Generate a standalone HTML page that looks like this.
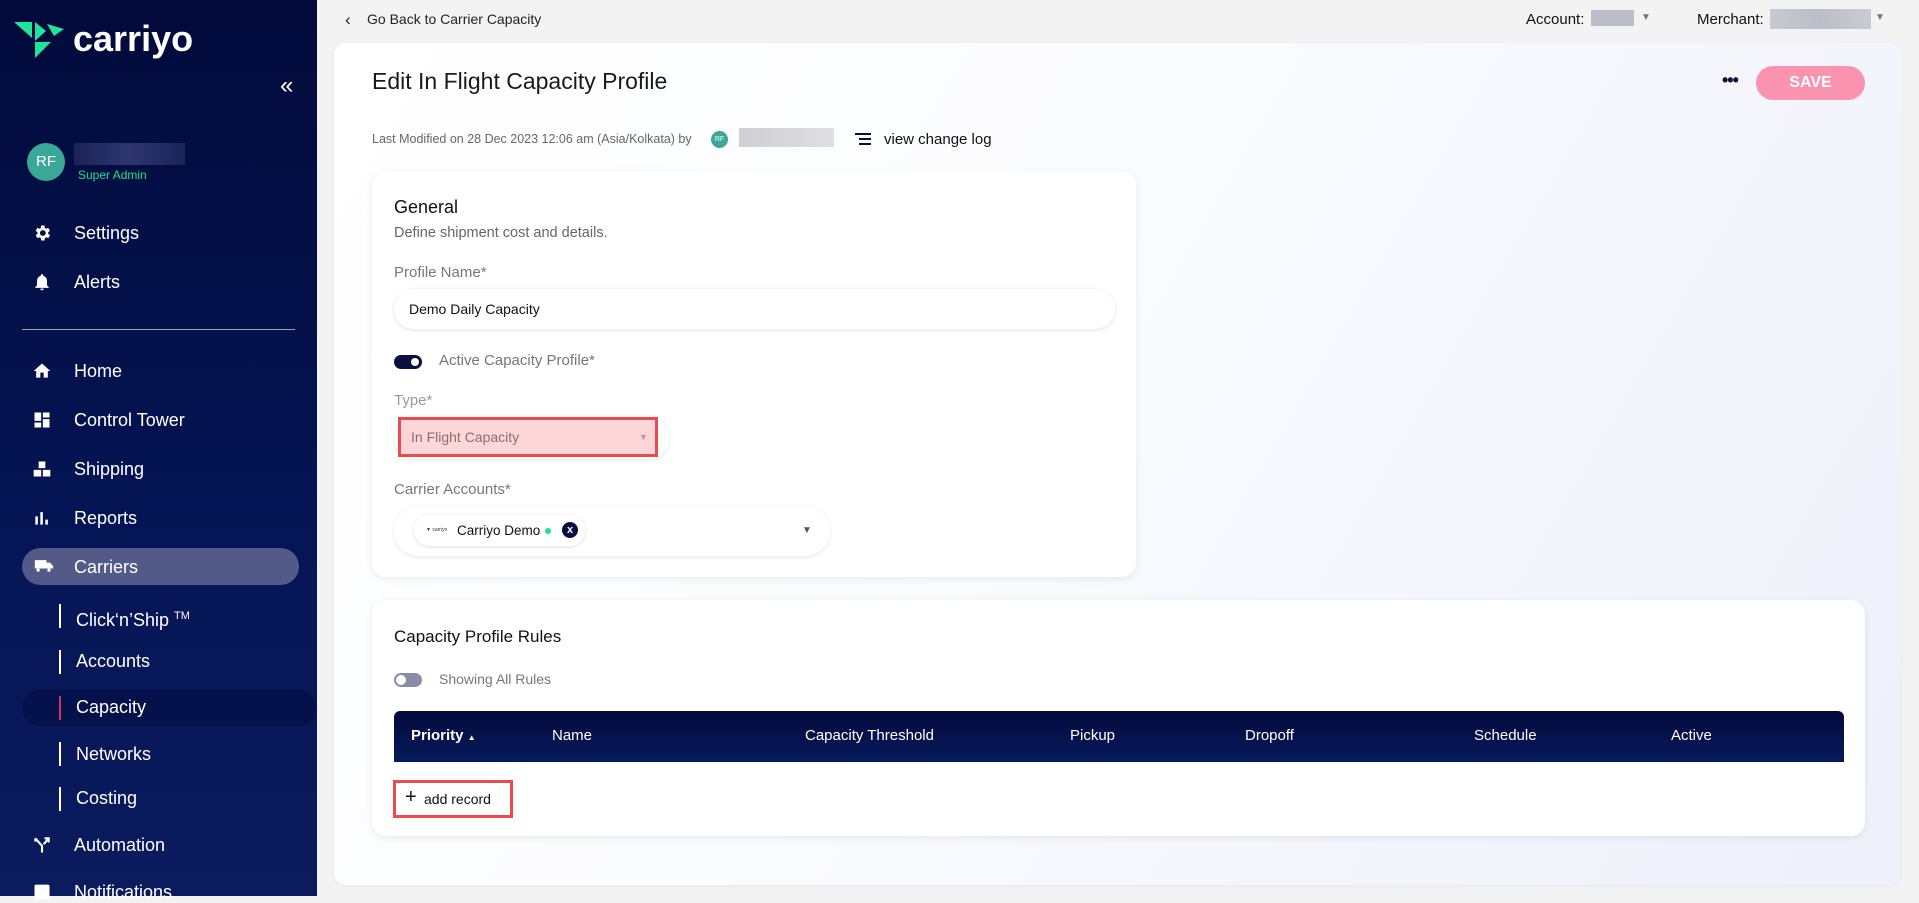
<!DOCTYPE html>
<html><head><meta charset="utf-8"><style>
*{box-sizing:border-box;margin:0;padding:0}
body{width:1919px;height:896px;overflow:hidden;background:#f3f3f3;font-family:"Liberation Sans",sans-serif;position:relative}
.abs{position:absolute}
#side{left:0;top:0;width:317px;height:896px;background:linear-gradient(180deg,#020a3b 0%,#051555 60%,#0a1b5e 100%)}
.nav{position:absolute;left:74px;color:#fff;font-size:18px;line-height:20px}
.ico{position:absolute;left:32px;width:20px;height:20px}
.sub{position:absolute;left:76px;color:#fff;font-size:18px;line-height:20px}
.bar{position:absolute;left:59px;width:2px;height:24px;background:#fff}
.card{position:absolute;background:#fff;border-radius:14px;box-shadow:0 2px 8px rgba(0,0,0,.08)}
.lbl{position:absolute;color:#777;font-size:14px}
</style></head><body>
<div id="side" class="abs">
  <svg class="abs" style="left:14px;top:20px" width="50" height="42" viewBox="0 0 50 42">
    <polygon points="0,2 18,2 18,18" fill="#1ee59a"/>
    <polygon points="21,2 32,11 21,21" fill="#1ee59a"/>
    <polygon points="33,4 50,9 40,16" fill="#1ee59a"/>
    <polygon points="21,22 37,22 21,38" fill="#1ee59a"/>
  </svg>
  <div class="abs" style="left:73px;top:18px;color:#fff;font-size:36px;font-weight:bold">carriyo</div>
  <div class="abs" style="left:280px;top:72px;color:#fff;font-size:24px">«</div>
  <div class="abs" style="left:27px;top:143px;width:38px;height:38px;border-radius:50%;background:#3aa896;color:#fff;font-size:15px;text-align:center;line-height:38px">RF</div>
  <div class="abs" style="left:74px;top:143px;width:111px;height:22px;background:linear-gradient(90deg,#1a2258,#2e3670,#1a2258)"></div>
  <div class="abs" style="left:78px;top:168px;color:#1de28f;font-size:12px">Super Admin</div>
  <svg class="ico" style="top:223px" viewBox="0 0 24 24"><path fill="#fff" d="M19.4 13a7.5 7.5 0 000-2l2.1-1.6-2-3.5-2.5 1a7 7 0 00-1.7-1L15 3h-4l-.4 2.9a7 7 0 00-1.7 1l-2.5-1-2 3.5L6.6 11a7.5 7.5 0 000 2l-2.1 1.6 2 3.5 2.5-1a7 7 0 001.7 1L11 21h4l.4-2.9a7 7 0 001.7-1l2.5 1 2-3.5zM13 15.5a3.5 3.5 0 110-7 3.5 3.5 0 010 7z"/></svg>
  <div class="nav" style="top:223px">Settings</div>
  <svg class="ico" style="top:272px" viewBox="0 0 24 24"><path fill="#fff" d="M12 22a2 2 0 002-2h-4a2 2 0 002 2zm6-6V11c0-3-1.6-5.6-4.5-6.3V4a1.5 1.5 0 00-3 0v.7C7.6 5.4 6 8 6 11v5l-2 2v1h16v-1z"/></svg>
  <div class="nav" style="top:272px">Alerts</div>
  <div class="abs" style="left:22px;top:329px;width:273px;height:1px;background:#9aa0c0"></div>
  <svg class="ico" style="top:361px" viewBox="0 0 24 24"><path fill="#fff" d="M10 20v-6h4v6h5v-8h3L12 3 2 12h3v8z"/></svg>
  <div class="nav" style="top:361px">Home</div>
  <svg class="ico" style="top:410px" viewBox="0 0 24 24"><path fill="#fff" d="M3 13h8V3H3zm0 8h8v-6H3zm10 0h8V11h-8zm0-18v6h8V3z"/></svg>
  <div class="nav" style="top:410px">Control Tower</div>
  <svg class="ico" style="top:459px" viewBox="0 0 24 24"><path fill="#fff" d="M8 3h8v8H8zM2 13h9v8H2zm11 0h9v8h-9z"/></svg>
  <div class="nav" style="top:459px">Shipping</div>
  <svg class="ico" style="top:508px" viewBox="0 0 24 24"><path fill="#fff" d="M4 10h3v10H4zm6-5h3v15h-3zm6 9h3v6h-3z"/></svg>
  <div class="nav" style="top:508px">Reports</div>
  <div class="abs" style="left:22px;top:548px;width:277px;height:37px;border-radius:19px;background:#525b87"></div>
  <svg class="ico" style="top:556px;width:24px" viewBox="0 0 24 24"><path fill="#fff" d="M1 5h14v10H1zm14 3h4l4 4v3h-8zM5 19a2 2 0 110-4 2 2 0 010 4zm13 0a2 2 0 110-4 2 2 0 010 4z"/></svg>
  <div class="nav" style="top:557px">Carriers</div>
  <div class="bar" style="top:604px"></div><div class="sub" style="top:606px">Click‘n’Ship <sup style="font-size:11px">TM</sup></div>
  <div class="bar" style="top:650px"></div><div class="sub" style="top:651px">Accounts</div>
  <div class="abs" style="left:22px;top:690px;width:295px;height:36px;border-radius:18px;background:#03093a;opacity:.45"></div>
  <div class="bar" style="top:696px;background:#d0365c"></div><div class="sub" style="top:697px">Capacity</div>
  <div class="bar" style="top:742px"></div><div class="sub" style="top:744px">Networks</div>
  <div class="bar" style="top:787px"></div><div class="sub" style="top:788px">Costing</div>
  <svg class="ico" style="top:835px" viewBox="0 0 24 24"><path stroke="#fff" stroke-width="2.5" fill="none" d="M4 4l8 9v8M20 4l-6 7M15 4h5v5M4 4v4"/></svg>
  <div class="nav" style="top:835px">Automation</div>
  <svg class="ico" style="top:883px" viewBox="0 0 24 24"><rect x="3" y="2" width="18" height="18" rx="2" fill="#fff"/></svg>
  <div class="nav" style="top:882px">Notifications</div>
</div>

<div class="abs" style="left:345px;top:10px;font-size:17px;color:#222">‹</div>
<div class="abs" style="left:367px;top:11px;font-size:14px;color:#222">Go Back to Carrier Capacity</div>
<div class="abs" style="left:1526px;top:11px;font-size:15px;color:#111">Account:</div>
<div class="abs" style="left:1591px;top:10px;width:43px;height:16px;background:#bcbdc8"></div>
<div class="abs" style="left:1641px;top:12px;font-size:10px;color:#777">▼</div>
<div class="abs" style="left:1697px;top:11px;font-size:15px;color:#111">Merchant:</div>
<div class="abs" style="left:1770px;top:9px;width:101px;height:20px;background:linear-gradient(90deg,#c8c9d1,#bcbdc8,#cacbd2)"></div>
<div class="abs" style="left:1875px;top:12px;font-size:10px;color:#777">▼</div>

<div class="abs" style="left:334px;top:43px;width:1567px;height:842px;border-radius:12px;background:linear-gradient(120deg,#ffffff 0%,#fbfcff 40%,#eef0fa 100%);box-shadow:0 1px 4px rgba(0,0,0,.05)"></div>
<div class="abs" style="left:372px;top:68px;font-size:23px;color:#1a1a1a">Edit In Flight Capacity Profile</div>
<div class="abs" style="left:1722px;top:70px;font-size:18px;color:#0a0f3f;font-weight:bold;letter-spacing:-1px">•••</div>
<div class="abs" style="left:1756px;top:66px;width:109px;height:34px;border-radius:17px;background:#f993b0;color:#fff;font-weight:bold;font-size:16px;text-align:center;line-height:34px">SAVE</div>
<div class="abs" style="left:372px;top:132px;font-size:12.5px;color:#666">Last Modified on 28 Dec 2023 12:06 am (Asia/Kolkata) by</div>
<div class="abs" style="left:711px;top:131px;width:17px;height:17px;border-radius:50%;background:#3aa896;color:#fff;font-size:7px;text-align:center;line-height:17px">RF</div>
<div class="abs" style="left:739px;top:128px;width:95px;height:19px;background:linear-gradient(90deg,#cfcfd4,#d6d6db,#e0e0e4)"></div>
<svg class="abs" style="left:855px;top:132px" width="16" height="14"><path d="M0 2h16M4 7h12M4 12h12" stroke="#0a0f3f" stroke-width="2"/></svg>
<div class="abs" style="left:884px;top:131px;font-size:15px;color:#111">view change log</div>

<div class="card" style="left:372px;top:171px;width:764px;height:406px"></div>
<div class="abs" style="left:394px;top:197px;font-size:18px;color:#111">General</div>
<div class="abs" style="left:394px;top:225px;font-size:14.5px;color:#666">Define shipment cost and details.</div>
<div class="lbl" style="left:394px;top:264px;font-size:15px">Profile Name*</div>
<div class="abs" style="left:394px;top:289px;width:721px;height:40px;border-radius:20px;background:#fff;box-shadow:0 1px 5px rgba(0,0,0,.12)"></div>
<div class="abs" style="left:409px;top:301px;font-size:14px;color:#111">Demo Daily Capacity</div>
<div class="abs" style="left:394px;top:355px;width:28px;height:14px;border-radius:7px;background:#0a0f3f"></div>
<div class="abs" style="left:411px;top:358px;width:8px;height:8px;border-radius:50%;background:#fff"></div>
<div class="lbl" style="left:439px;top:352px;font-size:15px">Active Capacity Profile*</div>
<div class="lbl" style="left:394px;top:392px;font-size:15px;color:#999">Type*</div>
<div class="abs" style="left:394px;top:417px;width:275px;height:42px;border-radius:21px;background:#fff;box-shadow:0 1px 5px rgba(0,0,0,.1)"></div>
<div class="abs" style="left:398px;top:417px;width:260px;height:40px;background:#fdd6d8;border:3px solid #ea4b4e"></div>
<div class="abs" style="left:411px;top:429px;font-size:14px;color:#8a6d70">In Flight Capacity</div>
<div class="abs" style="left:639px;top:432px;font-size:9px;color:#b89a9a">▼</div>
<div class="lbl" style="left:394px;top:481px;font-size:15px">Carrier Accounts*</div>
<div class="abs" style="left:394px;top:506px;width:436px;height:50px;border-radius:25px;background:#fff;box-shadow:0 1px 5px rgba(0,0,0,.1)"></div>
<div class="abs" style="left:414px;top:515px;width:171px;height:31px;border-radius:16px;background:#fff;box-shadow:0 1px 4px rgba(0,0,0,.12)"></div>
<div class="abs" style="left:426px;top:527px;font-size:5px;color:#333">▼ carriyo</div>
<div class="abs" style="left:457px;top:523px;font-size:13.5px;color:#111">Carriyo Demo</div>
<div class="abs" style="left:545px;top:528px;width:6px;height:6px;border-radius:50%;background:#1de28f"></div>
<div class="abs" style="left:562px;top:522px;width:16px;height:16px;border-radius:50%;background:#0a0f3f;color:#fff;font-size:11px;text-align:center;line-height:16px;font-weight:bold">x</div>
<div class="abs" style="left:802px;top:525px;font-size:10px;color:#555">▼</div>

<div class="card" style="left:372px;top:600px;width:1493px;height:236px"></div>
<div class="abs" style="left:394px;top:627px;font-size:17px;color:#111">Capacity Profile Rules</div>
<div class="abs" style="left:394px;top:673px;width:28px;height:14px;border-radius:7px;background:#8b8ca8"></div>
<div class="abs" style="left:396px;top:675px;width:10px;height:10px;border-radius:50%;background:#fff"></div>
<div class="lbl" style="left:439px;top:671px">Showing All Rules</div>
<div class="abs" style="left:394px;top:711px;width:1450px;height:51px;border-radius:6px 6px 0 0;background:linear-gradient(180deg,#020a3b,#081a5c);color:#fff;font-size:15px">
  <span class="abs" style="left:17px;top:16px;font-weight:bold">Priority <span style="font-size:8px">▲</span></span>
  <span class="abs" style="left:158px;top:16px">Name</span>
  <span class="abs" style="left:411px;top:16px">Capacity Threshold</span>
  <span class="abs" style="left:676px;top:16px">Pickup</span>
  <span class="abs" style="left:851px;top:16px">Dropoff</span>
  <span class="abs" style="left:1080px;top:16px">Schedule</span>
  <span class="abs" style="left:1277px;top:16px">Active</span>
</div>
<div class="abs" style="left:393px;top:780px;width:120px;height:38px;border:3px solid #ea4b4e;background:#fff"></div>
<div class="abs" style="left:405px;top:786px;font-size:20px;color:#111">+</div>
<div class="abs" style="left:424px;top:791px;font-size:14px;color:#111">add record</div>
</body></html>
